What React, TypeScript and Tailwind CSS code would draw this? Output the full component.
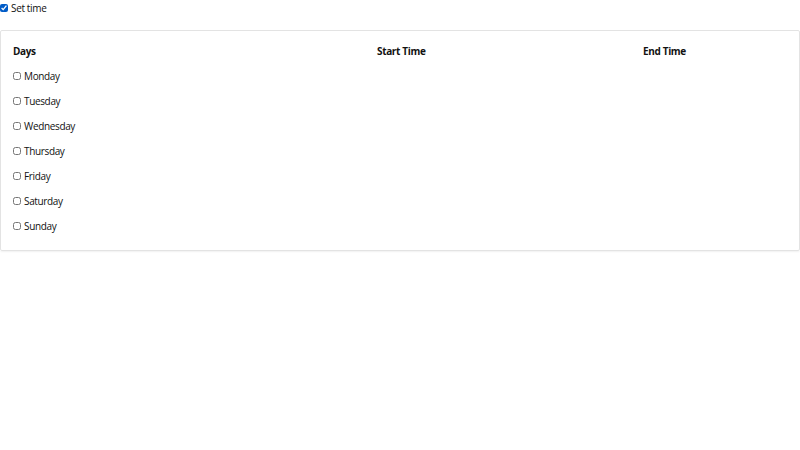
import React from "react";

const days = ["Monday", "Tuesday", "Wednesday", "Thursday", "Friday", "Saturday", "Sunday"];

export default function App() {
  return (
    <div className="w-[800px] h-[450px] bg-white text-[#111] text-[10px] leading-none tracking-[-0.35px]" style={{ fontFamily: '"Open Sans", sans-serif' }}>
      <label className="flex items-center h-[16px] gap-[3px]">
        <input type="checkbox" defaultChecked className="m-0 w-[8px] h-[8px] accent-[#0075ff]" />
        <span>Set time</span>
      </label>
      <div className="mt-[14px] border border-[#e3e3e3] rounded-[2px] shadow-[0_1px_2px_rgba(0,0,0,0.06)] pt-[7px] pb-[12px] pl-[12px] pr-[12px] h-[221px]">
        <div className="grid grid-cols-[364px_266px_1fr] h-[25px] items-center font-bold">
          <div>Days</div>
          <div>Start Time</div>
          <div>End Time</div>
        </div>
        {days.map((d) => (
          <div key={d} className="grid grid-cols-[364px_266px_1fr] h-[25px] items-center">
            <label className="flex items-center gap-[3px]">
              <input type="checkbox" className="m-0 w-[8px] h-[8px]" />
              <span>{d}</span>
            </label>
            <div></div>
            <div></div>
          </div>
        ))}
      </div>
    </div>
  );
}
